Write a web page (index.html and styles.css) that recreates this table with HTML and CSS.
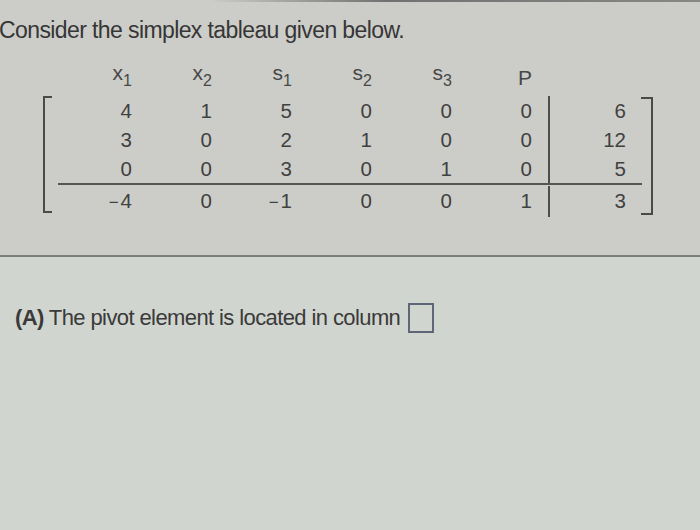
FILE: index.html
```html
<!DOCTYPE html>
<html>
<head>
<meta charset="utf-8">
<link rel="stylesheet" href="styles.css">
</head>
<body>
<div class="top-edge"></div>
<section class="upper">
  <p class="title">Consider the simplex tableau given below.</p>
  <div class="heads">
    <span class="h">x<sub>1</sub></span>
    <span class="h">x<sub>2</sub></span>
    <span class="h">s<sub>1</sub></span>
    <span class="h">s<sub>2</sub></span>
    <span class="h">s<sub>3</sub></span>
    <span class="h">P</span>
  </div>
  <div class="matrix">
    <div class="lb"></div>
    <div class="body">
      <span>4</span><span>1</span><span>5</span><span>0</span><span>0</span><span>0</span><span class="gap"></span><span class="rhs">6</span>
      <span>3</span><span>0</span><span>2</span><span>1</span><span>0</span><span>0</span><span class="gap"></span><span class="rhs">12</span>
      <span>0</span><span>0</span><span>3</span><span>0</span><span>1</span><span>0</span><span class="gap"></span><span class="rhs">5</span>
      <div class="hline"></div>
      <span><span class="neg">−</span>4</span><span>0</span><span><span class="neg">−</span>1</span><span>0</span><span>0</span><span>1</span><span class="gap"></span><span class="rhs">3</span>
    </div>
    <div class="rb"></div>
  </div>
</section>
<section class="lower">
  <div class="question">
    <span class="qtext"><b>(A)</b> The pivot element is located in column</span>
    <span class="answer"></span>
  </div>
</section>
</body>
</html>
```

FILE: styles.css
```css
html, body {
  margin: 0;
  padding: 0;
}
body {
  width: 700px;
  height: 530px;
  overflow: hidden;
  background: #d1d5cf;
  font-family: "Liberation Sans", Arial, sans-serif;
  color: #3f3f3f;
  position: relative;
}
.top-edge {
  position: absolute;
  left: 0;
  top: 0;
  width: 700px;
  height: 2px;
  background: linear-gradient(to right, rgba(110,112,110,0) 30%, #6f7270 55%, #858885 100%);
}
.upper {
  background: #cccdc8;
  height: 257px;
  padding-top: 18px;
  box-sizing: border-box;
  border-bottom: 2px solid #7c7e7b;
}
.title {
  margin: 0 0 0 -1px;
  font-size: 23px;
  letter-spacing: -0.6px;
  line-height: 24px;
  color: #363636;
}
.heads {
  display: grid;
  grid-template-columns: repeat(6, 80px);
  align-items: end;
  margin: 20px 0 0 52px;
  font-size: 21px;
  line-height: 22px;
  color: #474747;
}
.h {
  text-align: right;
}
.h sub {
  font-size: 16px;
  line-height: 1;
  vertical-align: -6px;
}
.matrix {
  display: flex;
  margin: 7px 0 0 43px;
}
.lb, .rb {
  width: 9px;
  height: 117px;
  border: 2px solid #4a4a4a;
  box-sizing: border-box;
}
.lb {
  border-right: none;
}
.rb {
  width: 12px;
  margin-left: 13px;
  border-left: none;
  height: 118px;
  margin-top: 1px;
}
.body {
  display: grid;
  grid-template-columns: repeat(6, 80px) 16px 80px;
  font-size: 20.5px;
  line-height: 29px;
  color: #414141;
}
.body span {
  text-align: right;
}
.body .neg {
  font-size: 17px;
  margin-right: 2px;
}
.body .rhs {
  border-left: 2px solid #4d4d4d;
  padding-right: 2px;
}
.hline {
  grid-column: 1 / -1;
  height: 2px;
  margin: 0 -14px 1px 6px;
  background: #555;
}
.question {
  display: flex;
  align-items: center;
  margin: 46px 0 0 15px;
}
.qtext {
  font-size: 22px;
  letter-spacing: -0.6px;
  line-height: 30px;
  color: #3a3a3a;
}
.answer {
  width: 26px;
  height: 30px;
  margin-left: 8px;
  border: 2px solid #5f6678;
  box-sizing: border-box;
}
```
